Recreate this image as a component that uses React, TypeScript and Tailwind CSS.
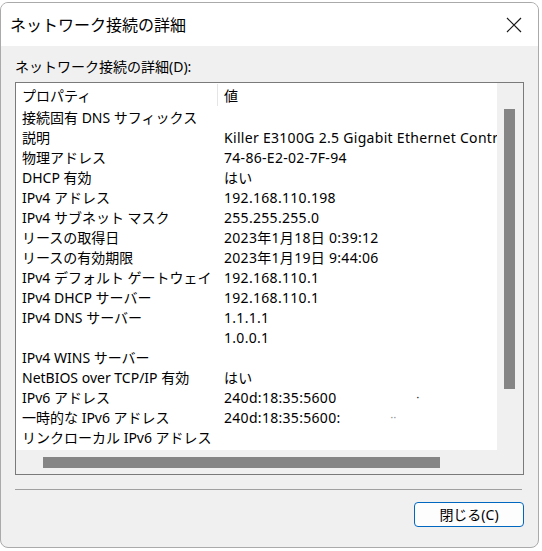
import React from 'react';

const rows: [string, string][] = [
  ['接続固有 DNS サフィックス', ''],
  ['説明', 'Killer E3100G 2.5 Gigabit Ethernet Controller'],
  ['物理アドレス', '74-86-E2-02-7F-94'],
  ['DHCP 有効', 'はい'],
  ['IPv4 アドレス', '192.168.110.198'],
  ['IPv4 サブネット マスク', '255.255.255.0'],
  ['リースの取得日', '2023年1月18日 0:39:12'],
  ['リースの有効期限', '2023年1月19日 9:44:06'],
  ['IPv4 デフォルト ゲートウェイ', '192.168.110.1'],
  ['IPv4 DHCP サーバー', '192.168.110.1'],
  ['IPv4 DNS サーバー', '1.1.1.1'],
  ['', '1.0.0.1'],
  ['IPv4 WINS サーバー', ''],
  ['NetBIOS over TCP/IP 有効', 'はい'],
  ['IPv6 アドレス', '240d:18:35:5600'],
  ['一時的な IPv6 アドレス', '240d:18:35:5600:'],
  ['リンクローカル IPv6 アドレス', ''],
];

const font = { fontFamily: '"Noto Sans", "Noto Sans CJK JP", sans-serif' };

export default function App() {
  return (
    <div className="w-[542px] h-[551px] bg-white pt-[2px]" style={font}>
      <div className="w-[539px] h-[546px] flex flex-col border border-[#aaaaaa] rounded-lg overflow-hidden bg-[#f0f0f0]">
        {/* title bar */}
        <div className="h-[43px] bg-white flex items-center justify-between pl-[9px] pr-[16px] shrink-0">
          <span className="text-[16px] text-black leading-none">ネットワーク接続の詳細</span>
          <svg width="16" height="16" viewBox="0 0 16 16" className="text-[#1a1a1a]">
            <path d="M1 1 L15 15 M15 1 L1 15" stroke="currentColor" strokeWidth="1.2" />
          </svg>
        </div>

        {/* body */}
        <div className="flex flex-col pl-[14px] pr-[14px] pt-[14px]">
          <div className="text-[14px] leading-none text-black h-[22px]">ネットワーク接続の詳細(D):</div>

          <div className="w-[509px] h-[393px] border border-[#7a7a7a] flex flex-col">
            <div className="flex h-[367px]">
              <div className="w-[481px] bg-white overflow-hidden text-[14px] text-black">
                <div className="flex h-[24px] items-center">
                  <div className="w-[202px] pl-[6px] shrink-0 whitespace-nowrap border-r border-[#e5e5e5] h-[22px] flex items-center">
                    プロパティ
                  </div>
                  <div className="pl-[6px]">値</div>
                </div>
                {rows.map(([k, v], i) => (
                  <div key={i} className="flex h-[20px] items-center whitespace-nowrap">
                    <div className="w-[203px] pl-[6px] shrink-0">{k}</div>
                    <div className="pl-[5px] flex items-center tracking-[0.3px]">
                      {v}
                      {i === 14 && <span className="ml-[80px] text-[10px]">·</span>}
                      {i === 15 && <span className="ml-[50px] text-[10px] text-[#888]">··</span>}
                    </div>
                  </div>
                ))}
              </div>
              {/* vertical scrollbar */}
              <div className="flex-1 bg-[#f0f0f0] pt-[26px] pl-[7px]">
                <div className="w-[11px] h-[280px] bg-[#858585]" />
              </div>
            </div>
            {/* horizontal scrollbar */}
            <div className="flex-1 bg-[#f0f0f0] pt-[7px] pl-[27px]">
              <div className="w-[397px] h-[11px] bg-[#858585]" />
            </div>
          </div>

          <div className="mt-[14px] w-[507px] h-px bg-[#a0a0a0]" />

          <div className="flex justify-end mt-[12px]">
            <button className="w-[110px] h-[25px] rounded-[4px] border border-[#0067c0] bg-[#fdfdfd] text-[14px] text-black flex items-center justify-center leading-none">
              閉じる(C)
            </button>
          </div>
        </div>
      </div>
    </div>
  );
}
